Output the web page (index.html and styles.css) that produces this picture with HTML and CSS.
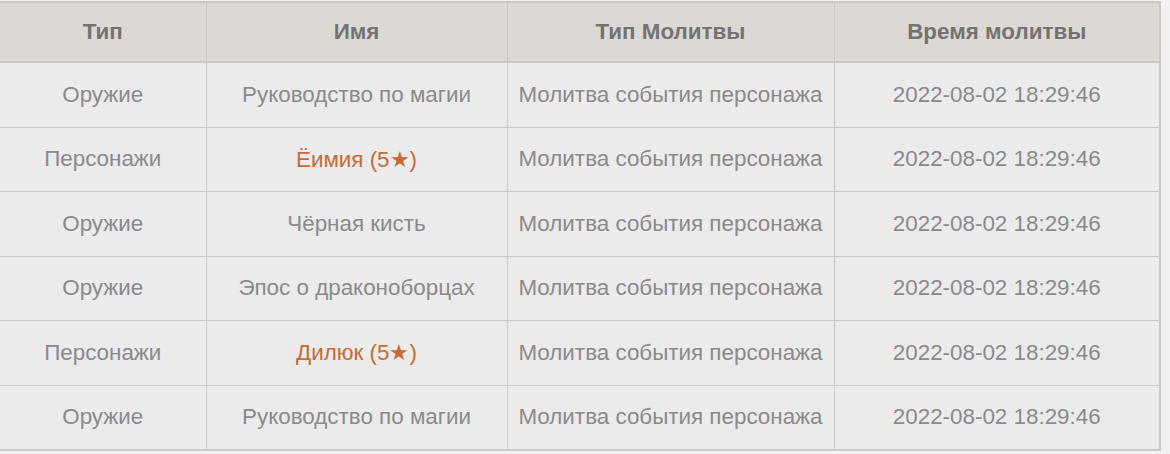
FILE: index.html
```html
<!DOCTYPE html>
<html lang="ru">
<head>
<meta charset="utf-8">
<link rel="stylesheet" href="styles.css">
</head>
<body>
<div class="wrap">
<table class="log">
  <colgroup>
    <col class="c1"><col class="c2"><col class="c3"><col class="c4">
  </colgroup>
  <thead>
    <tr><th>Тип</th><th>Имя</th><th>Тип Молитвы</th><th>Время молитвы</th></tr>
  </thead>
  <tbody>
    <tr><td>Оружие</td><td>Руководство по магии</td><td>Молитва события персонажа</td><td>2022-08-02 18:29:46</td></tr>
    <tr><td>Персонажи</td><td class="star5">Ёимия (5★)</td><td>Молитва события персонажа</td><td>2022-08-02 18:29:46</td></tr>
    <tr><td>Оружие</td><td>Чёрная кисть</td><td>Молитва события персонажа</td><td>2022-08-02 18:29:46</td></tr>
    <tr><td>Оружие</td><td>Эпос о драконоборцах</td><td>Молитва события персонажа</td><td>2022-08-02 18:29:46</td></tr>
    <tr><td>Персонажи</td><td class="star5">Дилюк (5★)</td><td>Молитва события персонажа</td><td>2022-08-02 18:29:46</td></tr>
    <tr><td>Оружие</td><td>Руководство по магии</td><td>Молитва события персонажа</td><td>2022-08-02 18:29:46</td></tr>
  </tbody>
</table>
</div>
</body>
</html>
```
FILE: styles.css
```css
html, body {
  margin: 0;
  padding: 0;
  background: #f1f1f1;
}
body {
  font-family: "Liberation Sans", Arial, sans-serif;
}
.wrap {
  padding-top: 1px;
  margin-left: -2px;
}
.log {
  border-collapse: collapse;
  table-layout: fixed;
  width: 1161px;
  border: 2px solid #c9c9c9;
}
.c1 { width: 207px; }
.c2 { width: 301px; }
.c3 { width: 327px; }
.c4 { width: 326px; }
.log th {
  background: #dcd9d4;
  color: #737373;
  font-weight: bold;
  font-size: 22.4px;
  height: 58px;
  border: 1px solid #c9c9c9;
  border-bottom: 2px solid #c9c9c9;
  text-align: center;
  padding: 0;
}
.log td {
  background: #ebebeb;
  color: #8a8a8a;
  font-size: 22.4px;
  height: 63.5px;
  border: 1px solid #c9c9c9;
  text-align: center;
  padding: 0;
  white-space: nowrap;
}
.log td.star5 {
  color: #c46c34;
}
```
